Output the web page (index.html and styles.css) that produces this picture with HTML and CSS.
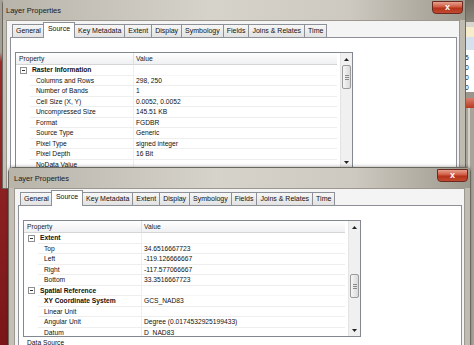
FILE: index.html
```html
<!DOCTYPE html>
<html lang="en">

<head>
  <meta charset="UTF-8" />
  <title>Layer Properties</title>
  <link rel="stylesheet" href="styles.css">
</head>

<body>

  <!-- window peeking out behind on the right -->
  <div class="behind">
    <div class="bh-title"></div>
    <div class="bh-bar"></div>
    <div class="bh-yellow"></div>
    <div class="bh-blue"></div>
    <div class="bh-list"><span>5</span><span>0</span><span>0</span><span>0</span></div>
    <div class="bh-line"></div>
    <div class="bh-close"></div>
    <div class="bh-frame"></div>
  </div>

  <!-- first dialog -->
  <div class="window w1">
    <div class="titlebar">
      <span class="title">Layer Properties</span>
      <span class="close">x</span>
    </div>
    <div class="client">
      <div class="tabs">
        <span class="tab">General</span>
        <span class="tab active">Source</span>
        <span class="tab">Key Metadata</span>
        <span class="tab">Extent</span>
        <span class="tab">Display</span>
        <span class="tab">Symbology</span>
        <span class="tab">Fields</span>
        <span class="tab">Joins &amp; Relates</span>
        <span class="tab">Time</span>
      </div>
      <div class="page">
        <div class="grid">
          <div class="grid-main">
            <div class="grid-head"><span class="h-prop">Property</span><span class="h-val">Value</span></div>
            <div class="row group"><span class="gutter"><i class="exp"></i></span><span class="c-prop">Raster Information</span><span class="c-val"></span></div>
            <div class="row"><span class="gutter"></span><span class="c-prop">Columns and Rows</span><span class="c-val">298, 250</span></div>
            <div class="row"><span class="gutter"></span><span class="c-prop">Number of Bands</span><span class="c-val">1</span></div>
            <div class="row"><span class="gutter"></span><span class="c-prop">Cell Size (X, Y)</span><span class="c-val">0.0052, 0.0052</span></div>
            <div class="row"><span class="gutter"></span><span class="c-prop">Uncompressed Size</span><span class="c-val">145.51 KB</span></div>
            <div class="row"><span class="gutter"></span><span class="c-prop">Format</span><span class="c-val">FGDBR</span></div>
            <div class="row"><span class="gutter"></span><span class="c-prop">Source Type</span><span class="c-val">Generic</span></div>
            <div class="row"><span class="gutter"></span><span class="c-prop">Pixel Type</span><span class="c-val">signed integer</span></div>
            <div class="row"><span class="gutter"></span><span class="c-prop">Pixel Depth</span><span class="c-val">16 Bit</span></div>
            <div class="row"><span class="gutter"></span><span class="c-prop">NoData Value</span><span class="c-val"></span></div>
          </div>
          <div class="vscroll">
            <span class="sb-btn"><svg width="5" height="3" viewBox="0 0 5 3"><path d="M0 3 L2.5 0 L5 3 Z" fill="#222"/></svg></span>
            <span class="sb-thumb"><i></i><i></i><i></i></span>
            <span class="sb-track"></span>
            <span class="sb-btn"><svg width="5" height="3" viewBox="0 0 5 3"><path d="M0 0 L5 0 L2.5 3 Z" fill="#222"/></svg></span>
          </div>
        </div>
      </div>
    </div>
  </div>

  <!-- second dialog, on top -->
  <div class="window w2">
    <div class="titlebar">
      <span class="title">Layer Properties</span>
      <span class="close">x</span>
    </div>
    <div class="client">
      <div class="tabs">
        <span class="tab">General</span>
        <span class="tab active">Source</span>
        <span class="tab">Key Metadata</span>
        <span class="tab">Extent</span>
        <span class="tab">Display</span>
        <span class="tab">Symbology</span>
        <span class="tab">Fields</span>
        <span class="tab">Joins &amp; Relates</span>
        <span class="tab">Time</span>
      </div>
      <div class="page">
        <div class="grid">
          <div class="grid-main">
            <div class="grid-head"><span class="h-prop">Property</span><span class="h-val">Value</span></div>
            <div class="row group"><span class="gutter"><i class="exp"></i></span><span class="c-prop">Extent</span><span class="c-val"></span></div>
            <div class="row"><span class="gutter"></span><span class="c-prop">Top</span><span class="c-val">34.6516667723</span></div>
            <div class="row"><span class="gutter"></span><span class="c-prop">Left</span><span class="c-val">-119.126666667</span></div>
            <div class="row"><span class="gutter"></span><span class="c-prop">Right</span><span class="c-val">-117.577066667</span></div>
            <div class="row"><span class="gutter"></span><span class="c-prop">Bottom</span><span class="c-val">33.3516667723</span></div>
            <div class="row group"><span class="gutter"><i class="exp"></i></span><span class="c-prop">Spatial Reference</span><span class="c-val"></span></div>
            <div class="row"><span class="gutter"></span><span class="c-prop strong">XY Coordinate System</span><span class="c-val">GCS_NAD83</span></div>
            <div class="row"><span class="gutter"></span><span class="c-prop">Linear Unit</span><span class="c-val"></span></div>
            <div class="row"><span class="gutter"></span><span class="c-prop">Angular Unit</span><span class="c-val">Degree (0.0174532925199433)</span></div>
            <div class="row"><span class="gutter"></span><span class="c-prop">Datum</span><span class="c-val">D_NAD83</span></div>
          </div>
          <div class="vscroll">
            <span class="sb-btn"><svg width="5" height="3" viewBox="0 0 5 3"><path d="M0 3 L2.5 0 L5 3 Z" fill="#222"/></svg></span>
            <span class="sb-track sb-gap"></span>
            <span class="sb-thumb"><i></i><i></i><i></i></span>
            <span class="sb-track"></span>
            <span class="sb-btn"><svg width="5" height="3" viewBox="0 0 5 3"><path d="M0 0 L5 0 L2.5 3 Z" fill="#222"/></svg></span>
          </div>
        </div>
        <div class="below">Data Source</div>
      </div>
    </div>
  </div>

</body>

</html>
```

FILE: styles.css
```css
* {
  margin: 0;
  padding: 0;
  box-sizing: border-box;
}

body {
  position: relative;
  width: 474px;
  height: 345px;
  overflow: hidden;
  font-family: "Liberation Sans", Arial, sans-serif;
  font-size: 6.7px;
  color: #111;
  background: linear-gradient(#a4a097 0, #a4a097 52px, #9a2a2c 62px, #7a1618 100%);
}

/* window behind, only a sliver shows */
.behind {
  position: absolute;
  left: 463px;
  top: 0;
  width: 11px;
  height: 345px;
  display: flex;
  flex-direction: column;
  background: #b3aea3;
}

.bh-title { height: 22px; background: linear-gradient(#6f6b62, #8d887d); }
.bh-bar { height: 5px; background: #d9d6cf; }
.bh-yellow { height: 10px; background: #f6eecb; }
.bh-blue { height: 13px; background: #d6e1ee; }

.bh-list {
  height: 42px;
  background: #fff;
  padding: 3px 0 0 2px;
  display: flex;
  flex-direction: column;
  line-height: 10px;
}

.bh-line { height: 6px; background: #9a968c; }
.bh-close { height: 10px; background: linear-gradient(#d9806c, #b83a22); }

.bh-frame {
  flex: 1;
  background: linear-gradient(to right, #a9a499 0, #a9a499 5px, #d4d1ca 5px, #d4d1ca 7px, #a9a499 7px);
}

/* dialog frame */
.window {
  position: absolute;
  display: flex;
  flex-direction: column;
  height: 190px;
  border: 1px solid #6a675f;
  border-radius: 5px 5px 0 0;
  background: linear-gradient(to right, #c3bfb6, #d3d0c9 50%, #bfbbb1);
}

.w1 {
  left: 2px;
  top: -1px;
  width: 464px;
}

.w2 {
  left: 8px;
  top: 167px;
  width: 463px;
  box-shadow: 0 -1px 3px rgba(0, 0, 0, 0.25);
}

.titlebar {
  height: 20px;
  display: flex;
  align-items: flex-start;
  padding: 0 2px 0 3px;
  background: linear-gradient(to right, #b8b4aa, #d6d3cb 45%, #cdc9c0 75%, #9e998d);
}

.title {
  margin-top: 6px;
  font-size: 7.5px;
  line-height: 9px;
  color: #1a1a1a;
}

.w2 .title {
  margin-left: 2px;
}

.close {
  margin-left: auto;
  margin-top: 1px;
  width: 31px;
  height: 13px;
  border: 1px solid #6b2a20;
  border-radius: 0 0 4px 4px;
  background: linear-gradient(#e7a090, #cf5a40 45%, #b3321a 55%, #c24a30);
  color: #fff;
  font: bold 9px "Liberation Sans", Arial, sans-serif;
  line-height: 10px;
  text-align: center;
}

.client {
  flex: 1;
  display: flex;
  flex-direction: column;
  margin: 0 5px 0 3px;
  padding: 3px 2px 0 3px;
  border: 1px solid #9c9890;
  border-bottom: none;
  background: #f4f4f4;
}

.w2 .client {
  margin-left: 5px;
}

/* tabs */
.tabs {
  display: flex;
  align-items: flex-end;
  height: 13px;
  padding-left: 2px;
}

.tab {
  height: 13px;
  padding: 0 3px;
  margin-right: -1px;
  border: 1px solid #8e9097;
  border-bottom: none;
  background: linear-gradient(#f6f6f6, #e2e2e2);
  font-size: 7px;
  line-height: 12px;
  white-space: nowrap;
}

.tab.active {
  height: 16px;
  margin: 0 -1px -1px -1px;
  padding: 0 4px;
  background: #fff;
  z-index: 1;
}

.page {
  flex: 1;
  padding: 14px 0 0 4px;
  border: 1px solid #8e9097;
  background: #fff;
}

/* property grid */
.grid {
  display: flex;
  width: 338px;
  height: 117px;
  border: 1px solid #828790;
  background: #fff;
}

.grid-main {
  flex: 1;
  margin-right: 3px;
  overflow: hidden;
}

.grid-head {
  display: flex;
  height: 12px;
  line-height: 11px;
  color: #222;
  border-bottom: 1px solid #d5d5d5;
  background: linear-gradient(#fff, #eff0f2);
}

.h-prop {
  width: 118px;
  padding-left: 3px;
  border-right: 1px solid #dfe0e2;
}

.h-val {
  padding-left: 2px;
}

.row {
  display: flex;
  height: 10.5px;
  line-height: 10px;
}

.gutter {
  width: 14px;
  display: flex;
  align-items: center;
  padding-left: 4px;
}

.exp {
  position: relative;
  width: 7px;
  height: 7px;
  border: 1px solid #909090;
  background: #fff;
}

.exp::after {
  content: "";
  position: absolute;
  left: 1px;
  top: 2px;
  width: 3px;
  height: 1px;
  background: #333;
}

.c-prop {
  width: 104px;
  padding-left: 6px;
  border-bottom: 1px solid #eeeeee;
  border-right: 1px solid #eeeeee;
  white-space: nowrap;
}

.group .c-prop {
  padding-left: 2px;
  font-weight: bold;
}

.c-prop.strong {
  font-weight: bold;
}

.c-val {
  flex: 1;
  padding-left: 2px;
  border-bottom: 1px solid #eeeeee;
  white-space: nowrap;
}

.group .c-val {
  border-bottom-color: #f6f6f6;
}

/* scrollbar */
.vscroll {
  width: 12px;
  display: flex;
  flex-direction: column;
  border-left: 1px solid #e4e4e4;
  background: #f0f0f0;
}

.sb-btn {
  height: 12px;
  display: flex;
  align-items: center;
  justify-content: center;
}

.sb-thumb {
  height: 24px;
  margin: 0 1px;
  display: flex;
  flex-direction: column;
  align-items: center;
  justify-content: center;
  gap: 1px;
  border: 1px solid #9b9b9b;
  border-radius: 2px;
  background: linear-gradient(to right, #f6f6f6, #dadada);
}

.sb-thumb i {
  width: 4px;
  height: 1px;
  background: #8a8a8a;
}

.sb-track {
  flex: 1;
}

.sb-gap {
  flex: none;
  height: 41px;
}

.below {
  margin-top: 2px;
  padding-left: 4px;
  line-height: 8px;
}
```
